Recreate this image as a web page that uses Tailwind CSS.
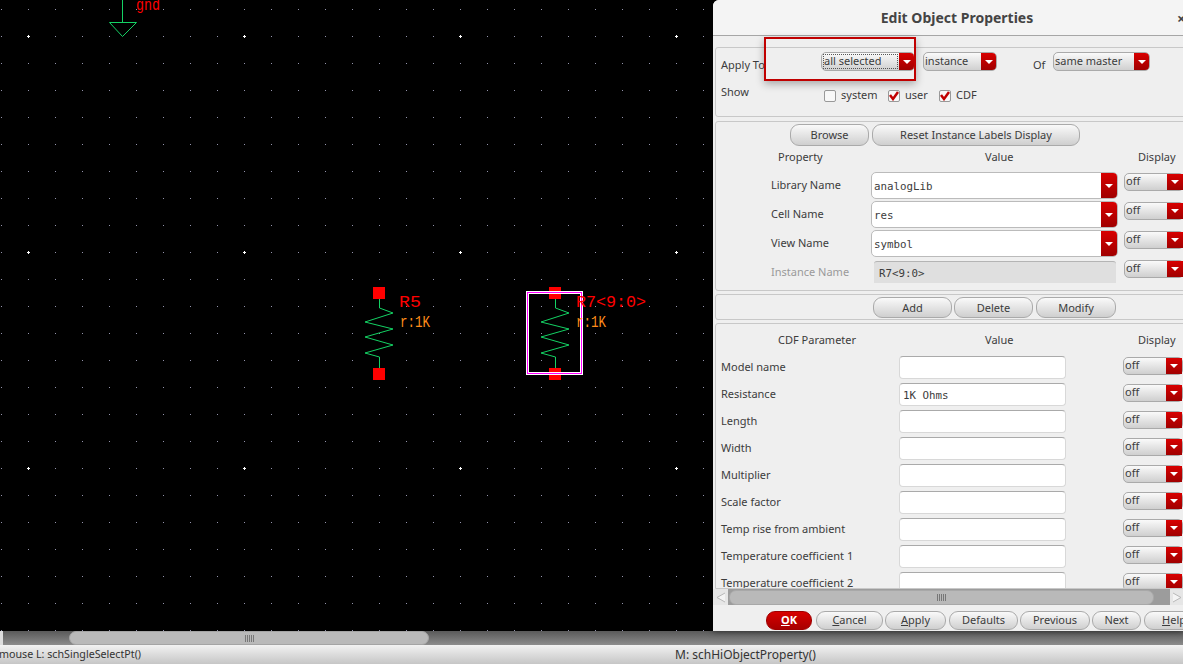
<!doctype html>
<html>
<head>
<meta charset="utf-8">
<script src="https://cdn.jsdelivr.net/npm/@tailwindcss/browser@4"></script>
<title>Edit Object Properties</title>
</head>
<body class="w-[1183px] h-[664px] overflow-hidden bg-black font-['Noto_Sans',sans-serif] text-[11px] text-[#3c3c3c]">
<div class="relative flex h-[664px] flex-col">

  <!-- schematic canvas -->
  <div class="h-[631px] w-full bg-black">
    <svg width="1183" height="631" viewBox="0 0 1183 631" shape-rendering="crispEdges">
      <defs>
        <pattern id="minor" x="1" y="9" width="27" height="27" patternUnits="userSpaceOnUse">
          <rect width="1" height="1" fill="#9494ac"/>
        </pattern>
        <pattern id="major" x="26" y="34" width="216" height="216" patternUnits="userSpaceOnUse">
          <rect x="2" y="1" width="1" height="3" fill="#fff"/>
          <rect x="1" y="2" width="3" height="1" fill="#fff"/>
        </pattern>
      </defs>
      <rect width="1183" height="631" fill="url(#minor)"/>
      <rect width="1183" height="631" fill="url(#major)"/>
      <g fill="none" stroke="#14d264" stroke-width="1">
        <path d="M122.500 0V22.500"/>
        <path d="M109.500 22.500H136.500L122.500 36.500Z" shape-rendering="auto"/>
        <path d="M379.500 299V308L393 313L365 322L393 329L365 337L393 345L365 353L379.500 357V368" shape-rendering="auto"/>
        <path d="M555.500 299V308L569 313L541 322L569 329L541 337L569 345L541 353L555.500 357V368" shape-rendering="auto"/>
      </g>
      <rect x="373" y="287" width="12" height="12" fill="#f00"/>
      <rect x="373" y="368" width="12" height="12" fill="#f00"/>
      <rect x="549" y="287" width="12" height="12" fill="#f00"/>
      <rect x="549" y="368" width="12" height="12" fill="#f00"/>
      <rect x="526.500" y="291.500" width="56" height="83" fill="none" stroke="#fff"/>
      <rect x="527.500" y="292.500" width="54" height="81" fill="none" stroke="#f0f"/>
      <rect x="528.500" y="293.500" width="52" height="79" fill="none" stroke="#fff"/>
      <g class="font-['Liberation_Mono']" font-size="16">
        <text x="136" y="10" fill="#f00" textLength="24" lengthAdjust="spacingAndGlyphs">gnd</text>
        <text x="399" y="307" fill="#f00" textLength="22" lengthAdjust="spacingAndGlyphs">R5</text>
        <text x="400" y="327" fill="#ff8c1a" textLength="30" lengthAdjust="spacingAndGlyphs">r:1K</text>
        <text x="576" y="307" fill="#f00" textLength="70" lengthAdjust="spacingAndGlyphs">R7&lt;9:0&gt;</text>
        <text x="576" y="327" fill="#ff8c1a" textLength="30" lengthAdjust="spacingAndGlyphs">r:1K</text>
      </g>
    </svg>
  </div>

  <!-- bottom scrollbar -->
  <div class="flex h-[14px] items-center bg-linear-to-b from-[#5a5a5a] to-[#8c8c8c]">
    <div class="h-[14px] w-[3px] bg-[#ddd]"></div>
    <div class="ml-[66px] flex h-[14px] w-[360px] items-center justify-center rounded-[7px] border border-[#a4a4a4] bg-[#b9b9b9]">
      <svg width="9" height="7" shape-rendering="crispEdges"><path d="M.500 0V7M2.500 0V7M4.500 0V7M6.500 0V7M8.500 0V7" stroke="#777"/></svg>
    </div>
  </div>

  <!-- status bar -->
  <div class="flex h-[19px] items-center bg-linear-to-b from-[#f2f2f2] to-[#c6c6c6] text-[#333]">
    <span class="-ml-[1px] w-[676px] text-[10.7px]">mouse L: schSingleSelectPt()</span>
    <span class="text-[12px]">M: schHiObjectProperty()</span>
  </div>

  <!-- dialog window -->
  <div class="absolute top-0 left-[713px] h-[631px] w-[470px] overflow-hidden rounded-tl-[6px] bg-[#efefef] shadow-[0_0_6px_rgba(0,0,0,0.6)]">
    <div class="flex h-[36px] items-center justify-center border-b border-[#a6a6a6] bg-[#f4f4f4] pb-[1px] pl-[18px] text-[14px] font-bold text-[#444]">
      Edit Object Properties
      <span class="absolute top-[7px] left-[464px] text-[15px]">×</span>
    </div>

    <!-- apply to -->
    <div class="mt-[11px] ml-[2px] h-[70px] w-[480px] rounded-[3px] border border-[#c8c8c8]">
      <div class="mt-[4px] flex h-[19px]">
        <div class="w-[105px] pt-[5px] pl-[5px]">Apply To</div>
        <div class="flex h-[19px] w-[94px] rounded-[5px] border border-[#aaa] bg-linear-to-b from-[#fafafa] to-[#d0d0d0]">
          <span class="m-[1px] flex-1 border border-dotted border-[#555] leading-[11px]">all selected</span>
          <span class="flex w-[15px] items-center justify-center rounded-r-[4px] bg-linear-to-b from-[#d80000] to-[#a00000]"><svg width="8" height="4"><path d="M0 0H8L4 4Z" fill="#fff"/></svg></span>
        </div>
        <div class="ml-[8px] flex h-[19px] w-[74px] rounded-[5px] border border-[#aaa] bg-linear-to-b from-[#fafafa] to-[#d0d0d0]">
          <span class="flex-1 pl-[1px] leading-[15px]">instance</span>
          <span class="flex w-[15px] items-center justify-center rounded-r-[4px] bg-linear-to-b from-[#d80000] to-[#a00000]"><svg width="8" height="4"><path d="M0 0H8L4 4Z" fill="#fff"/></svg></span>
        </div>
        <div class="w-[56px] pt-[5px] pl-[36px]">Of</div>
        <div class="flex h-[19px] w-[97px] rounded-[5px] border border-[#aaa] bg-linear-to-b from-[#fafafa] to-[#d0d0d0]">
          <span class="flex-1 pl-[1px] leading-[15px]">same master</span>
          <span class="flex w-[15px] items-center justify-center rounded-r-[4px] bg-linear-to-b from-[#d80000] to-[#a00000]"><svg width="8" height="4"><path d="M0 0H8L4 4Z" fill="#fff"/></svg></span>
        </div>
      </div>
      <div class="mt-[13px] flex h-[18px]">
        <div class="w-[108px] pl-[5px] leading-[16px]">Show</div>
        <div class="flex items-center gap-[5px] pt-[5px]">
          <span class="h-[12px] w-[12px] rounded-[2px] border border-[#999] bg-[#f8f8f8]"></span>
          <span class="w-[42px]">system</span>
          <span class="flex h-[12px] w-[12px] items-center justify-center rounded-[2px] border border-[#999] bg-[#f8f8f8]"><svg width="10" height="10"><path d="M1 4L4 8L9 1" fill="none" stroke="#c00000" stroke-width="2.500"/></svg></span>
          <span class="w-[29px]">user</span>
          <span class="flex h-[12px] w-[12px] items-center justify-center rounded-[2px] border border-[#999] bg-[#f8f8f8]"><svg width="10" height="10"><path d="M1 4L4 8L9 1" fill="none" stroke="#c00000" stroke-width="2.500"/></svg></span>
          <span>CDF</span>
        </div>
      </div>
    </div>

    <!-- property panel -->
    <div class="mt-[4px] ml-[2px] h-[170px] w-[480px] rounded-[3px] border border-[#c8c8c8]">
      <div class="mt-[2px] ml-[74px] flex gap-[3px]">
        <button class="h-[22px] w-[79px] rounded-[9px] border border-[#aaa] bg-linear-to-b from-[#fafafa] to-[#cfcfcf] pt-[1px]">Browse</button>
        <button class="h-[22px] w-[208px] rounded-[9px] border border-[#aaa] bg-linear-to-b from-[#fafafa] to-[#cfcfcf] pt-[1px]">Reset Instance Labels Display</button>
      </div>
      <div class="mt-[3px] flex h-[15px] leading-[15px]">
        <span class="w-[269px] pl-[62px]">Property</span>
        <span class="w-[153px]">Value</span>
        <span>Display</span>
      </div>
      <div class="mt-[8px] flex h-[27px]">
        <span class="w-[155px] pt-[5px] pl-[55px]">Library Name</span>
        <div class="flex w-[247px] rounded-[5px] border border-[#bbb] bg-white">
          <span class="flex-1 pt-[6px] pl-[2px] font-['DejaVu_Sans_Mono'] text-[10.800px]">analogLib</span>
          <span class="flex w-[16px] items-center justify-center rounded-r-[4px] bg-linear-to-b from-[#d80000] to-[#a00000]"><svg width="8" height="4"><path d="M0 0H8L4 4Z" fill="#fff"/></svg></span>
        </div>
        <div class="mt-[1px] ml-[6px] flex h-[18px] w-[60px] rounded-[5px] border border-[#aaa] bg-linear-to-b from-[#fafafa] to-[#cfcfcf]">
          <span class="flex-1 pl-[1px] leading-[14px]">off</span>
          <span class="flex w-[16px] items-center justify-center bg-linear-to-b from-[#d80000] to-[#a00000]"><svg width="8" height="4"><path d="M0 0H8L4 4Z" fill="#fff"/></svg></span>
        </div>
      </div>
      <div class="mt-[2px] flex h-[27px]">
        <span class="w-[155px] pt-[5px] pl-[55px]">Cell Name</span>
        <div class="flex w-[247px] rounded-[5px] border border-[#bbb] bg-white">
          <span class="flex-1 pt-[6px] pl-[2px] font-['DejaVu_Sans_Mono'] text-[10.800px]">res</span>
          <span class="flex w-[16px] items-center justify-center rounded-r-[4px] bg-linear-to-b from-[#d80000] to-[#a00000]"><svg width="8" height="4"><path d="M0 0H8L4 4Z" fill="#fff"/></svg></span>
        </div>
        <div class="mt-[1px] ml-[6px] flex h-[18px] w-[60px] rounded-[5px] border border-[#aaa] bg-linear-to-b from-[#fafafa] to-[#cfcfcf]">
          <span class="flex-1 pl-[1px] leading-[14px]">off</span>
          <span class="flex w-[16px] items-center justify-center bg-linear-to-b from-[#d80000] to-[#a00000]"><svg width="8" height="4"><path d="M0 0H8L4 4Z" fill="#fff"/></svg></span>
        </div>
      </div>
      <div class="mt-[2px] flex h-[27px]">
        <span class="w-[155px] pt-[5px] pl-[55px]">View Name</span>
        <div class="flex w-[247px] rounded-[5px] border border-[#bbb] bg-white">
          <span class="flex-1 pt-[6px] pl-[2px] font-['DejaVu_Sans_Mono'] text-[10.800px]">symbol</span>
          <span class="flex w-[16px] items-center justify-center rounded-r-[4px] bg-linear-to-b from-[#d80000] to-[#a00000]"><svg width="8" height="4"><path d="M0 0H8L4 4Z" fill="#fff"/></svg></span>
        </div>
        <div class="mt-[1px] ml-[6px] flex h-[18px] w-[60px] rounded-[5px] border border-[#aaa] bg-linear-to-b from-[#fafafa] to-[#cfcfcf]">
          <span class="flex-1 pl-[1px] leading-[14px]">off</span>
          <span class="flex w-[16px] items-center justify-center bg-linear-to-b from-[#d80000] to-[#a00000]"><svg width="8" height="4"><path d="M0 0H8L4 4Z" fill="#fff"/></svg></span>
        </div>
      </div>
      <div class="mt-[2px] flex h-[23px]">
        <span class="w-[158px] pt-[5px] pl-[55px] text-[#9a9a9a]">Instance Name</span>
        <div class="mt-[2px] h-[22px] w-[242px] rounded-t-[3px] border-t border-[#b4b4b4] bg-[#dfdfdf] pt-[4px] pl-[5px] font-['DejaVu_Sans_Mono'] text-[10.800px]">R7&lt;9:0&gt;</div>
        <div class="mt-[1px] ml-[8px] flex h-[18px] w-[60px] rounded-[5px] border border-[#aaa] bg-linear-to-b from-[#fafafa] to-[#cfcfcf]">
          <span class="flex-1 pl-[1px] leading-[14px]">off</span>
          <span class="flex w-[16px] items-center justify-center bg-linear-to-b from-[#d80000] to-[#a00000]"><svg width="8" height="4"><path d="M0 0H8L4 4Z" fill="#fff"/></svg></span>
        </div>
      </div>
    </div>

    <!-- add delete modify -->
    <div class="mt-[3px] ml-[2px] h-[26px] w-[480px] rounded-[3px] border border-[#c8c8c8]">
      <div class="mt-[2px] ml-[157px] flex">
        <button class="h-[21px] w-[79px] rounded-[9px] border border-[#aaa] bg-linear-to-b from-[#fafafa] to-[#cfcfcf] pt-[1px]">Add</button>
        <button class="ml-[2px] h-[21px] w-[79px] rounded-[9px] border border-[#aaa] bg-linear-to-b from-[#fafafa] to-[#cfcfcf] pt-[1px]">Delete</button>
        <button class="ml-[3px] h-[21px] w-[80px] rounded-[9px] border border-[#aaa] bg-linear-to-b from-[#fafafa] to-[#cfcfcf] pt-[1px]">Modify</button>
      </div>
    </div>

    <!-- cdf parameters -->
    <div class="mt-[3px] ml-[2px] h-[266px] w-[480px] overflow-hidden rounded-t-[3px] border border-[#c8c8c8]">
      <div class="mt-[8px] flex h-[15px] leading-[15px]">
        <span class="w-[269px] pl-[62px]">CDF Parameter</span>
        <span class="w-[153px]">Value</span>
        <span>Display</span>
      </div>
      <div class="mt-[9px] flex h-[23px] items-center gap-0">
        <span class="w-[183px] pl-[5px]">Model name</span>
        <div class="h-[23px] w-[167px] rounded-[4px] border border-[#d8d8d8] border-t-[#aaa] bg-white"></div>
        <div class="mt-[1px] ml-[57px] flex h-[18px] w-[60px] self-start rounded-[5px] border border-[#aaa] bg-linear-to-b from-[#fafafa] to-[#cfcfcf]"><span class="flex-1 pl-[1px] leading-[14px]">off</span><span class="flex w-[16px] items-center justify-center bg-linear-to-b from-[#d80000] to-[#a00000]"><svg width="8" height="4"><path d="M0 0H8L4 4Z" fill="#fff"/></svg></span></div>
      </div>
      <div class="mt-[4px] flex h-[23px] items-center">
        <span class="w-[183px] pl-[5px]">Resistance</span>
        <div class="h-[23px] w-[167px] rounded-[4px] border border-[#d8d8d8] border-t-[#aaa] bg-white pt-[4px] pl-[3px] font-['DejaVu_Sans_Mono'] text-[10.800px]">1K Ohms</div>
        <div class="mt-[1px] ml-[57px] flex h-[18px] w-[60px] self-start rounded-[5px] border border-[#aaa] bg-linear-to-b from-[#fafafa] to-[#cfcfcf]"><span class="flex-1 pl-[1px] leading-[14px]">off</span><span class="flex w-[16px] items-center justify-center bg-linear-to-b from-[#d80000] to-[#a00000]"><svg width="8" height="4"><path d="M0 0H8L4 4Z" fill="#fff"/></svg></span></div>
      </div>
      <div class="mt-[4px] flex h-[23px] items-center">
        <span class="w-[183px] pl-[5px]">Length</span>
        <div class="h-[23px] w-[167px] rounded-[4px] border border-[#d8d8d8] border-t-[#aaa] bg-white"></div>
        <div class="mt-[1px] ml-[57px] flex h-[18px] w-[60px] self-start rounded-[5px] border border-[#aaa] bg-linear-to-b from-[#fafafa] to-[#cfcfcf]"><span class="flex-1 pl-[1px] leading-[14px]">off</span><span class="flex w-[16px] items-center justify-center bg-linear-to-b from-[#d80000] to-[#a00000]"><svg width="8" height="4"><path d="M0 0H8L4 4Z" fill="#fff"/></svg></span></div>
      </div>
      <div class="mt-[4px] flex h-[23px] items-center">
        <span class="w-[183px] pl-[5px]">Width</span>
        <div class="h-[23px] w-[167px] rounded-[4px] border border-[#d8d8d8] border-t-[#aaa] bg-white"></div>
        <div class="mt-[1px] ml-[57px] flex h-[18px] w-[60px] self-start rounded-[5px] border border-[#aaa] bg-linear-to-b from-[#fafafa] to-[#cfcfcf]"><span class="flex-1 pl-[1px] leading-[14px]">off</span><span class="flex w-[16px] items-center justify-center bg-linear-to-b from-[#d80000] to-[#a00000]"><svg width="8" height="4"><path d="M0 0H8L4 4Z" fill="#fff"/></svg></span></div>
      </div>
      <div class="mt-[4px] flex h-[23px] items-center">
        <span class="w-[183px] pl-[5px]">Multiplier</span>
        <div class="h-[23px] w-[167px] rounded-[4px] border border-[#d8d8d8] border-t-[#aaa] bg-white"></div>
        <div class="mt-[1px] ml-[57px] flex h-[18px] w-[60px] self-start rounded-[5px] border border-[#aaa] bg-linear-to-b from-[#fafafa] to-[#cfcfcf]"><span class="flex-1 pl-[1px] leading-[14px]">off</span><span class="flex w-[16px] items-center justify-center bg-linear-to-b from-[#d80000] to-[#a00000]"><svg width="8" height="4"><path d="M0 0H8L4 4Z" fill="#fff"/></svg></span></div>
      </div>
      <div class="mt-[4px] flex h-[23px] items-center">
        <span class="w-[183px] pl-[5px]">Scale factor</span>
        <div class="h-[23px] w-[167px] rounded-[4px] border border-[#d8d8d8] border-t-[#aaa] bg-white"></div>
        <div class="mt-[1px] ml-[57px] flex h-[18px] w-[60px] self-start rounded-[5px] border border-[#aaa] bg-linear-to-b from-[#fafafa] to-[#cfcfcf]"><span class="flex-1 pl-[1px] leading-[14px]">off</span><span class="flex w-[16px] items-center justify-center bg-linear-to-b from-[#d80000] to-[#a00000]"><svg width="8" height="4"><path d="M0 0H8L4 4Z" fill="#fff"/></svg></span></div>
      </div>
      <div class="mt-[4px] flex h-[23px] items-center">
        <span class="w-[183px] pl-[5px]">Temp rise from ambient</span>
        <div class="h-[23px] w-[167px] rounded-[4px] border border-[#d8d8d8] border-t-[#aaa] bg-white"></div>
        <div class="mt-[1px] ml-[57px] flex h-[18px] w-[60px] self-start rounded-[5px] border border-[#aaa] bg-linear-to-b from-[#fafafa] to-[#cfcfcf]"><span class="flex-1 pl-[1px] leading-[14px]">off</span><span class="flex w-[16px] items-center justify-center bg-linear-to-b from-[#d80000] to-[#a00000]"><svg width="8" height="4"><path d="M0 0H8L4 4Z" fill="#fff"/></svg></span></div>
      </div>
      <div class="mt-[4px] flex h-[23px] items-center">
        <span class="w-[183px] pl-[5px]">Temperature coefficient 1</span>
        <div class="h-[23px] w-[167px] rounded-[4px] border border-[#d8d8d8] border-t-[#aaa] bg-white"></div>
        <div class="mt-[1px] ml-[57px] flex h-[18px] w-[60px] self-start rounded-[5px] border border-[#aaa] bg-linear-to-b from-[#fafafa] to-[#cfcfcf]"><span class="flex-1 pl-[1px] leading-[14px]">off</span><span class="flex w-[16px] items-center justify-center bg-linear-to-b from-[#d80000] to-[#a00000]"><svg width="8" height="4"><path d="M0 0H8L4 4Z" fill="#fff"/></svg></span></div>
      </div>
      <div class="mt-[4px] flex h-[23px] items-center">
        <span class="w-[183px] pl-[5px]">Temperature coefficient 2</span>
        <div class="h-[23px] w-[167px] rounded-[4px] border border-[#d8d8d8] border-t-[#aaa] bg-white"></div>
        <div class="mt-[1px] ml-[57px] flex h-[18px] w-[60px] self-start rounded-[5px] border border-[#aaa] bg-linear-to-b from-[#fafafa] to-[#cfcfcf]"><span class="flex-1 pl-[1px] leading-[14px]">off</span><span class="flex w-[16px] items-center justify-center bg-linear-to-b from-[#d80000] to-[#a00000]"><svg width="8" height="4"><path d="M0 0H8L4 4Z" fill="#fff"/></svg></span></div>
      </div>
    </div>

    <!-- horizontal scrollbar -->
    <div class="flex h-[16px] items-center bg-[#9c9c9c]">
      <div class="flex h-[16px] w-[15px] items-center justify-center bg-[#e6e6e6]"><svg width="10" height="11"><path d="M9 1L1 5.500L9 10" fill="#f4f4f4" stroke="#b8b8b8"/></svg></div>
      <div class="ml-[1px] flex h-[15px] w-[425px] items-center justify-center rounded-[7px] border border-[#a8a8a8] bg-[#b9b9b9]">
        <svg width="9" height="7" shape-rendering="crispEdges"><path d="M.500 0V7M2.500 0V7M4.500 0V7M6.500 0V7M8.500 0V7" stroke="#777"/></svg>
      </div>
      <div class="ml-auto flex h-[16px] w-[13px] items-center justify-center bg-[#e6e6e6]"><svg width="10" height="11"><path d="M1 1L9 5.500L1 10" fill="#f4f4f4" stroke="#b8b8b8"/></svg></div>
    </div>

    <!-- dialog buttons -->
    <div class="mt-[6px] ml-[53px] flex h-[19px] w-[500px]">
      <button class="w-[46px] rounded-[9px] border border-[#a00000] bg-linear-to-b from-[#d80000] to-[#a80000] font-bold text-white"><u>O</u>K</button>
      <button class="ml-[4px] w-[67px] rounded-[9px] border border-[#aaa] bg-linear-to-b from-[#fafafa] to-[#cfcfcf]"><u>C</u>ancel</button>
      <button class="ml-[2px] w-[61px] rounded-[9px] border border-[#aaa] bg-linear-to-b from-[#fafafa] to-[#cfcfcf]"><u>A</u>pply</button>
      <button class="ml-[3px] w-[69px] rounded-[9px] border border-[#aaa] bg-linear-to-b from-[#fafafa] to-[#cfcfcf]">Defaults</button>
      <button class="ml-[2px] w-[70px] rounded-[9px] border border-[#aaa] bg-linear-to-b from-[#fafafa] to-[#cfcfcf]">Previous</button>
      <button class="ml-[2px] w-[49px] rounded-[9px] border border-[#aaa] bg-linear-to-b from-[#fafafa] to-[#cfcfcf]">Next</button>
      <button class="ml-[3px] w-[60px] rounded-[9px] border border-[#aaa] bg-linear-to-b from-[#fafafa] to-[#cfcfcf]"><u>H</u>elp</button>
    </div>

    <!-- red annotation box -->
    <div class="absolute top-[37px] left-[51px] h-[44px] w-[152px] border-2 border-[#c00000] shadow-[0_3px_8px_rgba(0,0,0,0.3)]"></div>
  </div>
</div>
</body>
</html>
